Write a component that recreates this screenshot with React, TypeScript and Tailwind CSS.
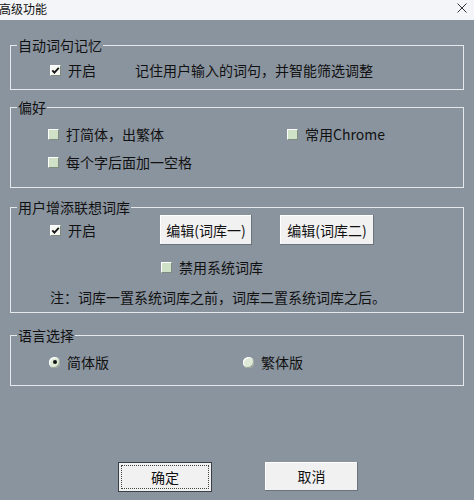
import type { ReactNode } from 'react';

function CheckBox({ checked = false }: { checked?: boolean }) {
  return (
    <span
      className={`flex h-[11px] w-[11px] shrink-0 items-center justify-center border border-t-white border-l-white border-r-[#7f8b7c] border-b-[#7f8b7c] ${
        checked ? 'bg-[#f6f8f4]' : 'bg-[#cfe1c7]'
      }`}
    >
      {checked && (
        <svg width="9" height="9" viewBox="0 0 9 9">
          <path d="M1.3 4.4 L3.4 6.6 L7.8 1.8" fill="none" stroke="#111" strokeWidth="1.8" />
        </svg>
      )}
    </span>
  );
}

function Radio({ checked = false }: { checked?: boolean }) {
  return (
    <span className="flex h-[11px] w-[11px] shrink-0 items-center justify-center rounded-full bg-[#dfe9d7] shadow-[inset_1px_1px_0_#ffffff,inset_-1px_-1px_0_#98a396]">
      {checked && <span className="h-[4px] w-[4px] rounded-full bg-[#111]" />}
    </span>
  );
}

function Option({ children, checked, radio }: { children: ReactNode; checked?: boolean; radio?: boolean }) {
  return (
    <div className="flex h-[16px] items-center gap-[7px]">
      {radio ? <Radio checked={checked} /> : <CheckBox checked={checked} />}
      <span className="leading-[16px]">{children}</span>
    </div>
  );
}

function Group({ title, children, className }: { title: string; children: ReactNode; className: string }) {
  return (
    <fieldset className={`mx-[10px] border border-[#e6e9ec] ${className}`}>
      <legend className="ml-[6px] px-[1px] text-[14px] leading-[16px]">{title}</legend>
      {children}
    </fieldset>
  );
}

function Btn({ children, className }: { children: ReactNode; className: string }) {
  return (
    <button
      className={`flex items-center justify-center bg-[#f1f1f1] text-[14px] text-[#111] shadow-[inset_-1px_-1px_0_#6b737c,inset_1px_1px_0_#ffffff] ${className}`}
    >
      {children}
    </button>
  );
}

export default function App() {
  return (
    <div className="flex min-h-[500px] w-[474px] flex-col bg-[#8a949f] font-['Noto_Sans_CJK_SC','Noto_Sans',sans-serif] text-[14px] text-[#111]">
      {/* title bar */}
      <div className="flex h-[20px] items-start justify-between bg-[#f3f5f8]">
        <span className="ml-[-1px] pt-[1px] text-[12px] leading-[15px]">高级功能</span>
        <svg className="mr-[7px] mt-[3px]" width="10" height="10" viewBox="0 0 10 10">
          <path d="M0.5 0.5 L9.5 9.5 M9.5 0.5 L0.5 9.5" stroke="#333" strokeWidth="1" />
        </svg>
      </div>

      <Group title="自动词句记忆" className="mt-[17px]">
        <div className="flex items-center pl-[39px] pt-[9px] pb-[11px]">
          <div className="w-[85px]">
            <Option checked>开启</Option>
          </div>
          <span className="leading-[16px]">记住用户输入的词句，并智能筛选调整</span>
        </div>
      </Group>

      <Group title="偏好" className="mt-[9px]">
        <div className="grid grid-cols-[239px_1fr] gap-y-[12px] pl-[37px] pt-[11px] pb-[17px]">
          <Option>打简体，出繁体</Option>
          <Option>常用Chrome</Option>
          <Option>每个字后面加一空格</Option>
        </div>
      </Group>

      <Group title="用户增添联想词库" className="mt-[11px]">
        <div className="flex flex-col pb-[7px]">
          <div className="flex h-[30px] items-center pl-[39px]">
            <div className="w-[110px]">
              <Option checked>开启</Option>
            </div>
            <Btn className="h-[30px] w-[92px]">编辑(词库一)</Btn>
            <Btn className="ml-[28px] h-[30px] w-[94px]">编辑(词库二)</Btn>
          </div>
          <div className="mt-[14px] pl-[150px]">
            <Option>禁用系统词库</Option>
          </div>
          <div className="mt-[14px] pl-[39px] leading-[16px]">注：词库一置系统词库之前，词库二置系统词库之后。</div>
        </div>
      </Group>

      <Group title="语言选择" className="mt-[14px]">
        <div className="grid grid-cols-[194px_1fr] pl-[38px] pt-[11px] pb-[15px]">
          <Option radio checked>简体版</Option>
          <Option radio>繁体版</Option>
        </div>
      </Group>

      <div className="mt-[76px] flex items-start pl-[118px]">
        <button className="flex h-[30px] w-[94px] items-center justify-center border border-[#3a3f45] bg-[#f1f1f1] p-[2px] text-[14px] text-[#111]">
          <span className="flex h-full w-full items-center justify-center border border-dotted border-[#444]">确定</span>
        </button>
        <Btn className="ml-[53px] h-[29px] w-[93px]">取消</Btn>
      </div>
    </div>
  );
}
